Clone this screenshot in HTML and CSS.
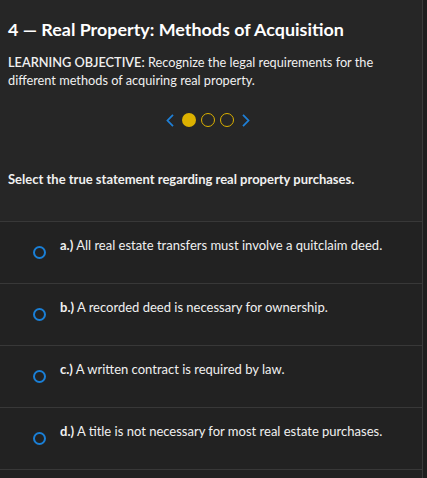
FILE: index.html
```html
<!DOCTYPE html>
<html lang="en">
<head>
  <meta charset="UTF-8">
  <title>Real Property: Methods of Acquisition</title>
  <link rel="stylesheet" href="styles.css">
</head>
<body>

  <div class="lesson">
    <div class="intro">
      <h1>4 — Real Property: Methods of Acquisition</h1>
      <p class="objective"><b class="obj-label">LEARNING OBJECTIVE:</b> Recognize the legal requirements for the different methods of acquiring real property.</p>

      <div class="pager">
        <svg class="arrow arrow-left" width="8" height="13" viewBox="0 0 8 13"><path d="M7 0.8 L1.5 6.5 L7 12.2" fill="none" stroke="#1e7fd6" stroke-width="1.8"/></svg>
        <span class="dot dot-on"></span>
        <span class="dot"></span>
        <span class="dot"></span>
        <svg class="arrow arrow-right" width="8" height="13" viewBox="0 0 8 13"><path d="M1 0.8 L6.5 6.5 L1 12.2" fill="none" stroke="#1e7fd6" stroke-width="1.8"/></svg>
      </div>

      <p class="question">Select the true statement regarding real property purchases.</p>
    </div>

    <ul class="options">
      <li class="option"><span class="radio"></span><span class="opt-text"><b>a.)</b> All real estate transfers must involve a quitclaim deed.</span></li>
      <li class="option"><span class="radio"></span><span class="opt-text"><b>b.)</b> A recorded deed is necessary for ownership.</span></li>
      <li class="option"><span class="radio"></span><span class="opt-text"><b>c.)</b> A written contract is required by law.</span></li>
      <li class="option"><span class="radio"></span><span class="opt-text"><b>d.)</b> A title is not necessary for most real estate purchases.</span></li>
    </ul>
  </div>

</body>
</html>
```

FILE: styles.css
```css
body {
  margin: 0;
  background-color: #1e1e1e;
  font-family: Lato, "Open Sans", Arial, sans-serif;
  color: #f0f0f0;
}

.lesson {
  width: 422px;
  min-height: 478px;
  background-color: #222222;
  border-right: 1px solid #3a3a3a;
}

.intro {
  background-color: #262626;
  padding: 19px 8px 0 8px;
  height: 202px;
}

h1 {
  margin: 0;
  font-size: 17.9px;
  line-height: 20px;
  font-weight: bold;
  color: #ffffff;
}

.objective {
  margin: 14px 0 0 0;
  font-size: 12.75px;
  line-height: 18px;
}

.obj-label {
  font-weight: 600;
}

.pager {
  display: flex;
  justify-content: center;
  align-items: center;
  gap: 5px;
  margin-top: 22px;
  padding-right: 7px;
  height: 18px;
}

.arrow-left {
  margin-right: 3px;
}

.arrow-right {
  margin-left: 3px;
}

.dot {
  box-sizing: border-box;
  width: 14px;
  height: 14px;
  border: 1.5px solid #dcb100;
  border-radius: 50%;
}

.dot-on {
  border: none;
  background-color: #dcb100;
}

.question {
  margin: 42px 0 0 0;
  font-size: 13px;
  font-weight: bold;
  line-height: 16px;
}

.options {
  list-style: none;
  margin: 0;
  padding: 0;
}

.option {
  display: flex;
  align-items: flex-start;
  height: 61px;
  border-top: 1px solid #383838;
  border-bottom: 1px solid #383838;
  margin-bottom: -1px;
}

.radio {
  flex: none;
  width: 9px;
  height: 9px;
  border: 2px solid #1a7fd6;
  border-radius: 50%;
  margin: 24px 0 0 33px;
}

.opt-text {
  margin: 15px 0 0 14px;
  font-size: 13px;
  line-height: 16px;
}

.opt-text b {
  font-weight: bold;
}
```
